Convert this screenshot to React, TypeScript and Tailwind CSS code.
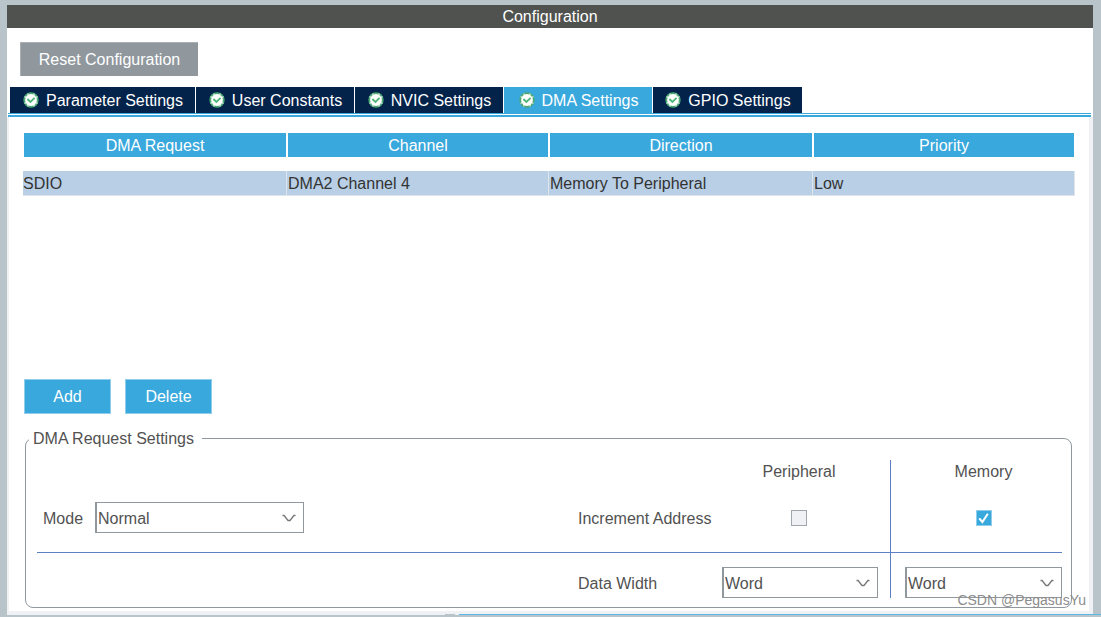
import { useState } from "react";
import type { ReactNode } from "react";

const TABS = [
  { label: "Parameter Settings", width: "w-[185px]" },
  { label: "User Constants", width: "w-[158px]" },
  { label: "NVIC Settings", width: "w-[148px]" },
  { label: "DMA Settings", width: "w-[148px]" },
  { label: "GPIO Settings", width: "w-[149px]" },
];

const COLUMNS = ["DMA Request", "Channel", "Direction", "Priority"];

const REQUESTS = [["SDIO", "DMA2 Channel 4", "Memory To Peripheral", "Low"]];

function StatusIcon() {
  return (
    <svg width="16" height="16" viewBox="0 0 16 16" aria-hidden="true">
      <circle cx="8" cy="8" r="7.7" fill="#4aa873" />
      <circle cx="8" cy="8" r="5.9" fill="#fff" />
      <path
        d="M4.6 1.6l.8 1.4M11.4 1.6l-.8 1.4M4.6 14.4l.8-1.4M11.4 14.4l-.8-1.4M1.6 4.6l1.4.8M1.6 11.4l1.4-.8M14.4 4.6l-1.4.8M14.4 11.4l-1.4-.8"
        stroke="#e2f3e9"
        strokeWidth="1.2"
      />
      <path d="M4.4 7 7.4 10l4.2-4.2" fill="none" stroke="#4fb878" strokeWidth="1.8" />
    </svg>
  );
}

function Button({ children }: { children: ReactNode }) {
  return (
    <button
      type="button"
      className="h-[35px] w-[87px] border border-[#8fcdeb] bg-[#39a8dc] text-white"
    >
      {children}
    </button>
  );
}

function Select({
  id,
  label,
  options,
  className,
}: {
  id: string;
  label?: string;
  options: string[];
  className: string;
}) {
  return (
    <div className={`relative ${className}`}>
      <select
        id={id}
        aria-label={label}
        className="block h-[31px] w-full appearance-none border border-l-2 border-[#90989e] bg-white pt-0.5 pr-6 pl-px text-[#525252]"
      >
        {options.map((option) => (
          <option key={option}>{option}</option>
        ))}
      </select>
      <svg
        className="pointer-events-none absolute top-3 right-2"
        width="14"
        height="8"
        viewBox="0 0 14 8"
        aria-hidden="true"
      >
        <path d="M.5 1.5h1.6L6 6.5h2l3.9-5h1.6" fill="none" stroke="#777" strokeWidth="1.3" />
      </svg>
    </div>
  );
}

function Checkbox({ label, defaultChecked }: { label: string; defaultChecked?: boolean }) {
  return (
    <span className="relative block size-4">
      <input
        type="checkbox"
        aria-label={label}
        defaultChecked={defaultChecked}
        className="peer block size-4 appearance-none border border-[#a0a7ac] bg-[#eff1f4] checked:border-[#8fcdeb] checked:bg-[#39a8dc]"
      />
      <svg
        className="pointer-events-none absolute inset-0 hidden peer-checked:block"
        width="16"
        height="16"
        viewBox="0 0 16 16"
        aria-hidden="true"
      >
        <path d="M3.2 8.3 6.4 12l5.4-8.2" fill="none" stroke="#fff" strokeWidth="2" />
      </svg>
    </span>
  );
}

function RequestTable() {
  return (
    <table className="w-full table-fixed border-separate border-spacing-0">
      <colgroup>
        <col className="w-[264px]" />
        <col className="w-[262px]" />
        <col className="w-[264px]" />
        <col />
      </colgroup>
      <thead>
        <tr>
          {COLUMNS.map((column) => (
            <th
              key={column}
              className="h-[38px] border-x border-b-[14px] border-white bg-[#39a8dc] p-0 pt-0.5 leading-5 font-normal text-white"
            >
              {column}
            </th>
          ))}
        </tr>
      </thead>
      <tbody>
        {REQUESTS.map((row) => (
          <tr key={row[0]} className="bg-[#b8cfe6] text-[#333]">
            {row.map((cell) => (
              <td
                key={cell}
                className="h-[25px] border-r border-b border-[#dfe5ea] p-0 pt-0.5 pl-px leading-5 first:pl-0"
              >
                {cell}
              </td>
            ))}
          </tr>
        ))}
      </tbody>
    </table>
  );
}

function RequestSettings() {
  return (
    <fieldset className="rounded-lg border border-[#90989e] pr-[9px] pb-[9px] pl-[11px] text-[#525252]">
      <legend className="-ml-2 pt-0.5 pr-2 pl-1 leading-6">DMA Request Settings</legend>
      <div className="mt-[9px] grid grid-cols-[1fr_130px_182px_172px] whitespace-nowrap">
        <div className="col-start-3 flex h-6 items-center justify-center">Peripheral</div>
        <div className="flex items-center justify-center border-l border-[#5f7fc4] pl-[14px]">Memory</div>

        <div className="flex h-[69px] items-center gap-3 border-b border-[#5f7fc4] pb-px pl-[6px]">
          <label htmlFor="mode" className="pt-0.5">
            Mode
          </label>
          <Select id="mode" options={["Normal", "Circular"]} className="w-[209px]" />
        </div>
        <div className="flex items-center border-b border-[#5f7fc4] pt-0.5">Increment Address</div>
        <div className="flex items-center justify-center border-b border-[#5f7fc4] pb-px">
          <Checkbox label="Increment Address Peripheral" />
        </div>
        <div className="flex items-center justify-center border-b border-l border-[#5f7fc4] pb-px pl-[14px]">
          <Checkbox label="Increment Address Memory" defaultChecked />
        </div>

        <label htmlFor="peripheral-width" className="col-start-2 flex h-[45px] items-end pb-0.5">
          Data Width
        </label>
        <div className="flex items-end pr-3 pl-[14px]">
          <Select id="peripheral-width" options={["Word", "Half Word", "Byte"]} className="w-full" />
        </div>
        <div className="flex items-end border-l border-[#5f7fc4] pl-[14px]">
          <Select
            id="memory-width"
            label="Data Width Memory"
            options={["Word", "Half Word", "Byte"]}
            className="w-full"
          />
        </div>
      </div>
    </fieldset>
  );
}

export default function App() {
  const [active, setActive] = useState("DMA Settings");

  return (
    <div className="relative flex min-h-screen flex-col bg-[#b8c4ca] pt-[5px] pb-[2px] font-['Liberation_Sans',Arial,sans-serif] text-base leading-6">
      <main className="mr-2 ml-[7px] flex flex-1 flex-col bg-white">
        <h1 className="h-[23px] bg-[#4f524f] text-center leading-[23px] text-white">Configuration</h1>

        <div className="px-[13px] pt-[14px] pb-[11px]">
          <button
            type="button"
            className="block h-[34px] w-[178px] border-t border-l border-[#a9b0b4] bg-[#90989e] text-white"
          >
            Reset Configuration
          </button>
        </div>

        <div role="tablist" className="flex gap-px pl-[3px]">
          {TABS.map((tab) => (
            <button
              key={tab.label}
              type="button"
              role="tab"
              aria-selected={tab.label === active}
              onClick={() => setActive(tab.label)}
              className={`flex h-[26px] items-center justify-center gap-[7px] pl-px text-white ${tab.width} ${
                tab.label === active ? "bg-[#39a8dc]" : "bg-[#03234b]"
              }`}
            >
              <StatusIcon />
              <span className="pt-0.5">{tab.label}</span>
            </button>
          ))}
        </div>
        <div className="mr-[2px] ml-px h-1 border-t border-b-2 border-[#39a8dc]" />

        <section className="flex flex-1 flex-col border-r-4 border-b-3 border-l-2 border-[#eff1f4] pb-[3px]">
          <div className="flex-1 pt-4 pr-[14px] pl-[14px]">
            <RequestTable />
          </div>
          <div className="mb-[11px] flex gap-[14px] pl-[15px]">
            <Button>Add</Button>
            <Button>Delete</Button>
          </div>
          <div className="pr-[17px] pl-4">
            <RequestSettings />
          </div>
        </section>
      </main>

      <div className="flex h-px pl-[7px]">
        <div className="w-[438px] bg-[#eff1f4]" />
        <div className="ml-[10px] w-1 bg-[#eff1f4]" />
        <div className="flex-1 bg-[#5cb8e4]" />
      </div>

      <div className="pointer-events-none absolute right-[15px] bottom-[7px] text-sm leading-5 text-[#8c8c8c]">
        CSDN @PegasusYu
      </div>
    </div>
  );
}
